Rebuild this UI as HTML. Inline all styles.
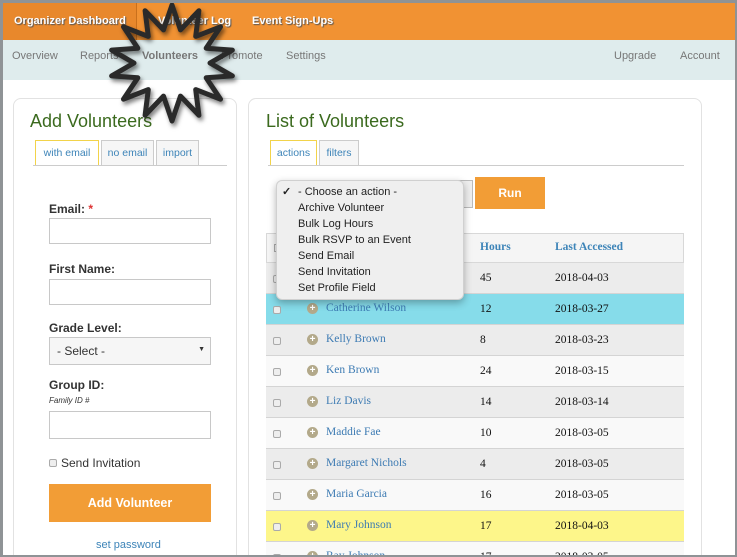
<!DOCTYPE html>
<html style="background:#fff"><head><style>
*{box-sizing:border-box;margin:0;padding:0}
html,body{width:737px;height:557px;overflow:hidden}
body{background:#fff;font-family:"Liberation Sans",sans-serif;position:relative}
.abs{position:absolute}
.top{left:0;top:0;width:737px;height:40px;background:#f19233}
.top span{position:absolute;top:15px;color:#fff;font-weight:bold;font-size:11px;text-shadow:1px 1px 1px #555}
.org{left:3px;top:3px;width:134px;height:37px;background:#e8882c;border-right:1px solid #c9701c}
.nav{left:0;top:40px;width:737px;height:40px;background:#dfeced}
.nav span{position:absolute;top:10px;font-size:11px;color:#777}
.panel{background:#fff;border:1px solid #e2e2e2;border-radius:8px;top:98px;height:480px}
h2{position:absolute;font-weight:normal;font-size:18px;color:#3b6a1e;top:111px}
.tab{position:absolute;top:140px;height:26px;border:1px solid #ccc;border-bottom:none;background:#f6f6f6;font-size:10.5px;color:#3d84b8;text-align:center;line-height:24px}
.tab.on{border:1px solid #f2d34a;border-bottom:none;background:#fff}
.lbl{position:absolute;left:49px;font-weight:bold;font-size:12px;color:#333}
.inp{position:absolute;left:49px;width:162px;border:1px solid #c8c8c8;background:#fff}
.row{position:absolute;left:266px;width:418px;height:31px;border-bottom:1px solid #d4d4d4;font-family:"Liberation Serif",serif;font-size:11.5px}
.row .cb{position:absolute;left:7px;top:12px;width:8px;height:8px;border:1px solid #aaa;border-radius:2px;background:#eee}
.row .pl{position:absolute;left:41px;top:9px;width:11px;height:11px;border-radius:50%;background:#b3a98a;color:#fff;font-size:10px;line-height:11px;text-align:center;font-family:"Liberation Sans",sans-serif;font-weight:bold}
.row .n{position:absolute;left:60px;top:8px;color:#3d7bb3}
.row .h{position:absolute;left:214px;top:9px;color:#111}
.row .d{position:absolute;left:289px;top:9px;color:#111}
</style></head><body>
<div class="abs top"></div>
<div class="abs org"></div>
<div class="abs top" style="background:none"><span style="left:14px">Organizer Dashboard</span><span style="left:158px">Volunteer Log</span><span style="left:252px">Event Sign-Ups</span></div>
<div class="abs nav"><span style="left:12px;top:10px">Overview</span><span style="left:80px">Reports</span><span style="left:142px;font-weight:bold">Volunteers</span><span style="left:221px">Promote</span><span style="left:286px">Settings</span><span style="left:614px">Upgrade</span><span style="left:680px">Account</span></div>

<div class="abs panel" style="left:13px;width:224px"></div>
<div class="abs panel" style="left:248px;width:454px"></div>

<h2 style="left:30px">Add Volunteers</h2>
<div class="tab on" style="left:35px;width:64px">with email</div>
<div class="tab" style="left:101px;width:53px">no email</div>
<div class="tab" style="left:156px;width:43px">import</div>
<div class="abs" style="left:33px;top:165px;width:194px;height:1px;background:#ccc"></div>
<div class="lbl" style="top:202px">Email: <span style="color:#d33">*</span></div>
<div class="inp" style="top:218px;height:26px"></div>
<div class="lbl" style="top:262px">First Name:</div>
<div class="inp" style="top:279px;height:26px"></div>
<div class="lbl" style="top:321px">Grade Level:</div>
<div class="inp" style="top:337px;height:28px;background:#f6f6f6;font-size:12px;color:#333;padding:6px 0 0 7px">- Select -<span style="position:absolute;right:5px;top:8px;font-size:7px">▼</span></div>
<div class="lbl" style="top:378px">Group ID:</div>
<div class="abs" style="left:49px;top:396px;font-size:8px;font-style:italic;color:#333">Family ID #</div>
<div class="inp" style="top:411px;height:28px"></div>
<div class="abs" style="left:49px;top:459px;width:8px;height:8px;border:1px solid #aaa;border-radius:2px;background:#eee"></div>
<div class="abs" style="left:61px;top:456px;font-size:12px;color:#333">Send Invitation</div>
<div class="abs" style="left:49px;top:484px;width:162px;height:38px;background:#f29d36;color:#fff;font-size:12.5px;font-weight:bold;text-align:center;line-height:38px">Add Volunteer</div>
<div class="abs" style="left:96px;top:539px;font-size:11px;color:#3d84b8">set password</div>

<h2 style="left:266px">List of Volunteers</h2>
<div class="tab on" style="left:270px;width:47px">actions</div>
<div class="tab" style="left:319px;width:40px">filters</div>
<div class="abs" style="left:268px;top:165px;width:416px;height:1px;background:#ccc"></div>
<div class="abs" style="left:284px;top:180px;width:189px;height:28px;border:1px solid #bbb;background:#eee"></div>
<div class="abs" style="left:475px;top:177px;width:70px;height:32px;background:#f29d36;color:#fff;font-weight:bold;font-size:12px;text-align:center;line-height:32px">Run</div>

<div class="abs" style="left:266px;top:233px;width:418px;height:30px;background:#f5f5f5;border:1px solid #d8d8d8;font-family:'Liberation Serif',serif;font-weight:bold;font-size:11.5px;color:#3d84b8"><span style="position:absolute;left:213px;top:7px">Hours</span><span style="position:absolute;left:288px;top:7px">Last Accessed</span><div style="position:absolute;left:7px;top:10px;width:8px;height:8px;border:1px solid #aaa;background:#eee"></div></div>
<div class="row" style="top:263px;background:#ececec"><div class="cb"></div><div class="h">45</div><div class="d">2018-04-03</div></div>
<div class="row" style="top:294px;background:#86dcea"><div class="cb"></div><div class="pl">+</div><div class="n">Catherine Wilson</div><div class="h">12</div><div class="d">2018-03-27</div></div>
<div class="row" style="top:325px;background:#ececec"><div class="cb"></div><div class="pl">+</div><div class="n">Kelly Brown</div><div class="h">8</div><div class="d">2018-03-23</div></div>
<div class="row" style="top:356px;background:#f9f9f9"><div class="cb"></div><div class="pl">+</div><div class="n">Ken Brown</div><div class="h">24</div><div class="d">2018-03-15</div></div>
<div class="row" style="top:387px;background:#ececec"><div class="cb"></div><div class="pl">+</div><div class="n">Liz Davis</div><div class="h">14</div><div class="d">2018-03-14</div></div>
<div class="row" style="top:418px;background:#f9f9f9"><div class="cb"></div><div class="pl">+</div><div class="n">Maddie Fae</div><div class="h">10</div><div class="d">2018-03-05</div></div>
<div class="row" style="top:449px;background:#ececec"><div class="cb"></div><div class="pl">+</div><div class="n">Margaret Nichols</div><div class="h">4</div><div class="d">2018-03-05</div></div>
<div class="row" style="top:480px;background:#f9f9f9"><div class="cb"></div><div class="pl">+</div><div class="n">Maria Garcia</div><div class="h">16</div><div class="d">2018-03-05</div></div>
<div class="row" style="top:511px;background:#fdf68a"><div class="cb"></div><div class="pl">+</div><div class="n">Mary Johnson</div><div class="h">17</div><div class="d">2018-04-03</div></div>
<div class="row" style="top:542px;background:#f9f9f9"><div class="cb"></div><div class="pl">+</div><div class="n">Ray Johnson</div><div class="h">17</div><div class="d">2018-03-05</div></div>

<div class="abs" style="left:276px;top:180px;width:188px;height:120px;background:#efefef;border:1px solid #d0d0d0;border-radius:6px;box-shadow:0 3px 8px rgba(0,0,0,.3);font-size:11px;color:#222;line-height:16px;padding:3px 0 0 21px">
<span style="position:absolute;left:5px;top:3px;font-weight:bold">✓</span>
- Choose an action -<br>Archive Volunteer<br>Bulk Log Hours<br>Bulk RSVP to an Event<br>Send Email<br>Send Invitation<br>Set Profile Field</div>

<svg class="abs" style="left:0;top:0" width="300" height="140">
<defs><filter id="sh"><feDropShadow dx="2" dy="3" stdDeviation="2" flood-opacity=".5"/></filter></defs>
<polygon filter="url(#sh)" fill="none" stroke="#2b2b2b" stroke-width="5" stroke-linejoin="round" points="172,5 180.5,29.9 198.9,10.7 195.7,36.4 220.5,26.8 206.2,48.2 232.4,50.1 210,63 232.4,75.9 206.2,77.8 220.5,99.2 195.7,89.6 198.9,115.3 180.5,96.1 172,121 163.5,96.1 145.1,115.3 148.3,89.6 123.5,99.2 137.8,77.8 111.6,75.9 134,63 111.6,50.1 137.8,48.2 123.5,26.8 148.3,36.4 145.1,10.7 163.5,29.9"/>
</svg>
<div class="abs" style="left:0;top:0;width:737px;height:3px;background:#8f9396"></div>
<div class="abs" style="left:0;top:0;width:3px;height:557px;background:#8f9396"></div>
<div class="abs" style="left:735px;top:0;width:2px;height:557px;background:#8f9396"></div>
<div class="abs" style="left:0;top:555px;width:737px;height:2px;background:#8f9396"></div>
</body></html>
